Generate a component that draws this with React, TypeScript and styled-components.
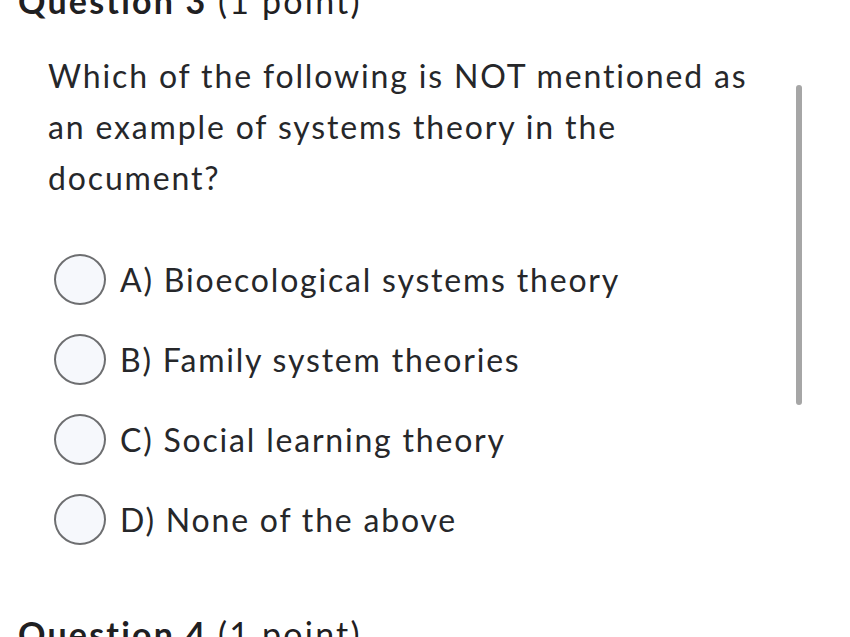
import React from "react";
import styled, { createGlobalStyle } from "styled-components";

const Global = createGlobalStyle`
  html, body { margin: 0; padding: 0; background: #ffffff; }
  body { font-family: Lato, "Open Sans", sans-serif; color: #202122; overflow: hidden; }
`;

const Page = styled.div`
  position: relative;
  width: 850px;
  height: 637px;
  overflow: hidden;
  background: #ffffff;
`;

const Title = styled.h2`
  margin: -19px 0 0 18px;
  font-size: 34px;
  line-height: 1.2;
  letter-spacing: 2.2px;
  font-weight: 700;
  color: #1f2022;
  white-space: nowrap;
`;

const Points = styled.span`
  font-weight: 400;
`;

const Prompt = styled.p`
  margin: 28px 0 0 48px;
  width: 720px;
  font-size: 32px;
  line-height: 51px;
  letter-spacing: 1.85px;
  color: #26272a;
`;

const Options = styled.div`
  margin: 37px 0 0 54px;
  display: flex;
  flex-direction: column;
`;

const Option = styled.label`
  display: flex;
  align-items: center;
  gap: 14px;
  height: 80px;
  font-size: 32px;
  letter-spacing: 1.8px;
  color: #26272a;
`;

const Radio = styled.span`
  box-sizing: border-box;
  width: 52px;
  height: 51px;
  border-radius: 50%;
  border: 2px solid #6d6e70;
  background: #f6f8fc;
  flex: none;
`;

const NextTitle = styled(Title)`
  margin: 54px 0 0 18px;
`;

const Scrollbar = styled.div`
  position: absolute;
  left: 796px;
  top: 85px;
  width: 6px;
  height: 320px;
  border-radius: 3px;
  background: #a6a6a6;
`;

const options = [
  "A) Bioecological systems theory",
  "B) Family system theories",
  "C) Social learning theory",
  "D) None of the above",
];

export default function App() {
  return (
    <Page>
      <Global />
      <Title>
        Question 3 <Points>(1 point)</Points>
      </Title>
      <Prompt>
        Which of the following is NOT mentioned as an example of systems theory in the document?
      </Prompt>
      <Options>
        {options.map((o) => (
          <Option key={o}>
            <Radio />
            {o}
          </Option>
        ))}
      </Options>
      <NextTitle>
        Question 4 <Points>(1 point)</Points>
      </NextTitle>
      <Scrollbar />
    </Page>
  );
}
